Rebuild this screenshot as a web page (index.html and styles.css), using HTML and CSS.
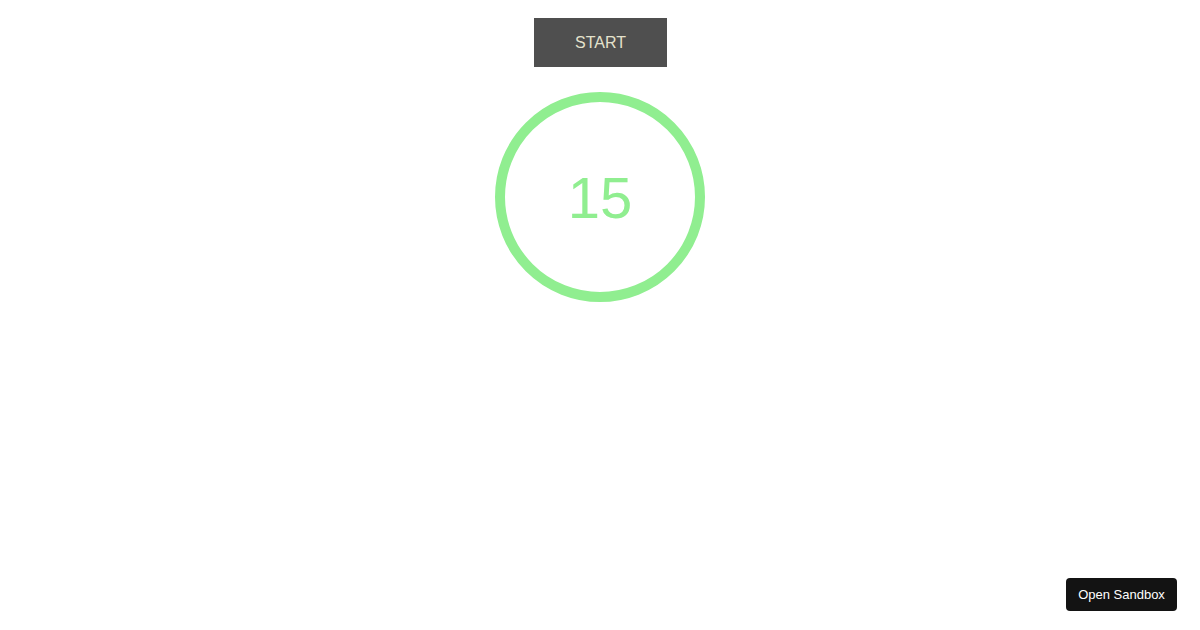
FILE: index.html
```html
<!DOCTYPE html>
<html>
<head>
<meta charset="utf-8">
<link rel="stylesheet" href="styles.css">
</head>
<body>
<main class="app">
  <button class="start">START</button>
  <div class="timer"><span class="count">15</span></div>
</main>
<a class="sandbox">Open Sandbox</a>
</body>
</html>
```
FILE: styles.css
```css
html, body { margin: 0; padding: 0; background: #fff; }
body { width: 1200px; height: 630px; position: relative; font-family: "Liberation Sans", Arial, sans-serif; }
.app { display: flex; flex-direction: column; align-items: center; padding-top: 18px; gap: 25px; }
.start {
  width: 133px; height: 49px; background: #4f4f4f; color: #e4e2cc; border: none;
  font-family: "Liberation Sans", Arial, sans-serif; font-size: 16px; padding: 0; margin-left: 1px;
}
.timer {
  box-sizing: border-box; width: 210px; height: 210px; border-radius: 50%;
  border: 10px solid #90ee90; display: flex; align-items: center; justify-content: center;
}
.count { color: #90ee90; font-size: 58px; line-height: 1; padding-top: 2px; }
.sandbox {
  position: absolute; right: 23px; bottom: 19px; width: 111px; height: 33px; box-sizing: border-box;
  background: #131313; color: #fff; border-radius: 4px; font-size: 13px;
  display: flex; align-items: center; justify-content: center;
}
```
